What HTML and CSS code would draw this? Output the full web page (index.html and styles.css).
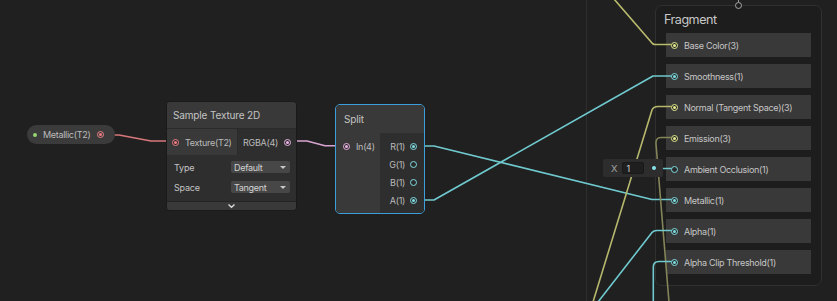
FILE: index.html
```html
<!DOCTYPE html>
<html>
<head>
<meta charset="utf-8">
<link rel="stylesheet" href="styles.css">
</head>
<body>
<div class="canvas">
  <div class="grid-line"></div>

  <div class="context">
    <div class="ctx-top"><span class="stem"></span><span class="top-ring"></span></div>
    <div class="ctx-title">Fragment</div>
    <div class="blocks">
      <div class="block"><span class="port yel on"></span><span class="blabel">Base Color(3)</span></div>
      <div class="block"><span class="port cyan on"></span><span class="blabel">Smoothness(1)</span></div>
      <div class="block"><span class="port yel on"></span><span class="blabel">Normal (Tangent Space)(3)</span></div>
      <div class="block"><span class="port yel on"></span><span class="blabel">Emission(3)</span></div>
      <div class="block"><span class="port cyan"></span><span class="blabel">Ambient Occlusion(1)</span></div>
      <div class="block"><span class="port cyan on"></span><span class="blabel">Metallic(1)</span></div>
      <div class="block"><span class="port cyan on"></span><span class="blabel">Alpha(1)</span></div>
      <div class="block"><span class="port cyan on"></span><span class="blabel">Alpha Clip Threshold(1)</span></div>
    </div>
  </div>

  <svg class="edges" width="837" height="301" viewBox="0 0 837 301">
    <g fill="none" stroke-width="1.6" stroke-linejoin="round" stroke-linecap="round">
      <path stroke="#d7777b" d="M104,135 L119,135 L151,141 L172,141"/>
      <path stroke="#d6a4d0" d="M291,141 L307,141 L325,145.7 L343,145.7"/>
      <path stroke="#6fc9ce" d="M416,146 L434,146 L652,199.5 L671,199.5"/>
      <path stroke="#6fc9ce" d="M416,200 L434,200 L653,76 L671,76"/>
      <path stroke="#b9bc6d" d="M614,-1 L652,43 Q653,44.5 655,44.5 L671,44.5"/>
      <path stroke="#b6b86e" d="M593,302 L652,110 Q653.5,106.5 658,106.5 L671,106.5"/>
      <path stroke="#85855a" d="M669,302 L656,144 Q655.5,137.5 661,137.5 L671,137.5"/>
      <path stroke="#6fc9ce" d="M598,302 L652,232.5 Q653.5,230.5 657,230.5 L671,230.5"/>
      <path stroke="#6fc9ce" d="M653.3,302 L653.3,267 Q653.3,261.5 659,261.5 L671,261.5"/>
      <path stroke="#6fc9ce" d="M656,168.5 L671,168.5"/>
    </g>
  </svg>

  <div class="prop">
    <span class="prop-dot"></span>
    <span class="prop-label">Metallic(T2)</span>
    <span class="port red on"></span>
  </div>

  <div class="node sample">
    <div class="ntitle">Sample Texture 2D</div>
    <div class="nports">
      <div class="ins">
        <div class="prow"><span class="port red on"></span><span class="plabel">Texture(T2)</span></div>
      </div>
      <div class="outs">
        <div class="prow out"><span class="plabel">RGBA(4)</span><span class="port pink on"></span></div>
      </div>
    </div>
    <div class="props">
      <div class="frow"><span class="flabel">Type</span><span class="drop">Default<span class="arrow"></span></span></div>
      <div class="frow"><span class="flabel">Space</span><span class="drop">Tangent<span class="arrow"></span></span></div>
    </div>
    <div class="collapse">
      <svg width="9" height="6" viewBox="0 0 9 6"><path d="M1.5,1.5 L4.5,4.3 L7.5,1.5" fill="none" stroke="#d8d8d8" stroke-width="1.4"/></svg>
    </div>
  </div>

  <div class="node split">
    <div class="ntitle">Split</div>
    <div class="nports sbody">
      <div class="ins sins">
        <div class="srow"><span class="port pink on"></span><span class="plabel">In(4)</span></div>
      </div>
      <div class="outs souts">
        <div class="srow out"><span class="plabel">R(1)</span><span class="port cyan on"></span></div>
        <div class="srow out"><span class="plabel">G(1)</span><span class="port cyan"></span></div>
        <div class="srow out"><span class="plabel">B(1)</span><span class="port cyan"></span></div>
        <div class="srow out"><span class="plabel">A(1)</span><span class="port cyan on"></span></div>
      </div>
    </div>
  </div>

  <div class="inline-input">
    <span class="ix">X</span>
    <span class="ifield">1</span>
    <span class="idot"></span>
  </div>
</div>
</body>
</html>
```

FILE: styles.css
```css
* { box-sizing: border-box; }
html, body {
  margin: 0;
  padding: 0;
  background: #202020;
}
body {
  width: 837px;
  height: 301px;
  overflow: hidden;
  font-family: Inter, "Noto Sans", sans-serif;
  color: #c4c4c4;
}
.canvas {
  position: relative;
  width: 837px;
  height: 301px;
  overflow: hidden;
  background: #202020;
}
.grid-line {
  position: absolute;
  left: 586px;
  top: 0;
  width: 1px;
  height: 301px;
  background: #2e2e2e;
}

/* ports */
.port {
  --c: #84e4e7;
  width: 7px;
  height: 7px;
  flex: 0 0 7px;
  border-radius: 50%;
  border: 1.2px solid var(--c);
  display: flex;
  align-items: center;
  justify-content: center;
  background: #2a2a2a;
}
.port.on::after {
  content: "";
  width: 3px;
  height: 3px;
  border-radius: 50%;
  background: var(--c);
}
.port.cyan { --c: #7fdde2; }
.port.yel { --c: #e6ec8e; }
.port.red { --c: #ef7e84; }
.port.pink { --c: #eab3e3; }

/* context / fragment */
.context {
  position: absolute;
  left: 655px;
  top: 5px;
  width: 167px;
  height: 281px;
  background: #1d1d1d;
  border: 1px solid #303030;
  border-radius: 7px;
}
.ctx-top {
  position: absolute;
  left: 79px;
  top: -6px;
  width: 7px;
  height: 10px;
  display: flex;
  flex-direction: column;
  align-items: center;
}
.ctx-top .stem {
  width: 1px;
  height: 2px;
  background: #9a9a9a;
}
.ctx-top .top-ring {
  width: 7px;
  height: 7px;
  border-radius: 50%;
  border: 1.2px solid #a8a8a8;
  background: #1d1d1d;
}
.ctx-title {
  height: 27px;
  display: flex;
  align-items: center;
  padding-left: 8px;
  font-size: 12.6px;
  letter-spacing: -0.5px;
  color: #c8c8c8;
}
.blocks {
  display: flex;
  flex-direction: column;
  gap: 7px;
  padding: 0 10px;
}
.block {
  height: 24px;
  background: #393939;
  display: flex;
  align-items: center;
  padding-left: 5px;
  gap: 6px;
}
.blabel {
  font-size: 9px;
  letter-spacing: -0.3px;
  color: #c6c6c6;
  white-space: nowrap;
}

.edges {
  position: absolute;
  left: 0;
  top: 0;
}

/* property pill */
.prop {
  position: absolute;
  left: 27px;
  top: 125px;
  width: 88px;
  height: 19px;
  border-radius: 10px;
  background: #3b3b3b;
  display: flex;
  align-items: center;
  padding-left: 6px;
}
.prop-dot {
  width: 4px;
  height: 4px;
  border-radius: 50%;
  background: #94d66f;
}
.prop-label {
  font-size: 9px;
  letter-spacing: -0.3px;
  color: #bdbdbd;
  margin-left: 6px;
  margin-right: auto;
}
.prop .port {
  margin-right: 11px;
  background: #3b3b3b;
}

/* nodes */
.node {
  position: absolute;
  border-radius: 4px;
  overflow: hidden;
  background: #2e2e2e;
  border: 1px solid #1a1a1a;
}
.ntitle {
  background: #393939;
  font-size: 10px;
  letter-spacing: -0.15px;
  color: #c4c4c4;
  display: flex;
  align-items: center;
  padding-left: 6px;
}
.nports {
  display: flex;
}
.ins {
  background: #393939;
}
.outs {
  flex: 1;
  background: #2e2e2e;
}
.plabel {
  font-size: 9px;
  letter-spacing: -0.3px;
  color: #bcbcbc;
  white-space: nowrap;
}
.prow {
  height: 26px;
  display: flex;
  align-items: center;
  gap: 6px;
  padding-left: 5px;
}
.prow.out {
  justify-content: flex-end;
  padding-left: 0;
  padding-right: 5px;
}

.sample {
  left: 166px;
  top: 101px;
  width: 131px;
  height: 110px;
}
.sample .ntitle {
  height: 27px;
  border-bottom: 1px solid #2a2a2a;
}
.sample .ins {
  width: 71px;
  border-right: 1px solid #2a2a2a;
}
.props {
  background: #2e2e2e;
  padding: 2px 6px 3px 7px;
  height: 46px;
}
.frow {
  height: 20px;
  display: flex;
  align-items: center;
  justify-content: space-between;
}
.flabel {
  font-size: 9px;
  letter-spacing: -0.2px;
  color: #c4c4c4;
}
.drop {
  width: 59px;
  height: 12px;
  background: #474747;
  border-radius: 2px;
  font-size: 9px;
  letter-spacing: -0.3px;
  color: #d2d2d2;
  display: flex;
  align-items: center;
  justify-content: space-between;
  padding: 0 4px 0 3px;
}
.arrow {
  width: 0;
  height: 0;
  border-left: 3px solid transparent;
  border-right: 3px solid transparent;
  border-top: 3px solid #c8c8c8;
}
.collapse {
  height: 9px;
  background: #393939;
  border-top: 1px solid #232323;
  display: flex;
  align-items: center;
  justify-content: center;
}

.split {
  left: 335px;
  top: 104px;
  width: 90px;
  height: 110px;
  border: 1px solid #3c9fdc;
  border-radius: 5px;
}
.split .ntitle {
  height: 28px;
  padding-left: 8px;
}
.sbody {
  height: 80px;
}
.sins {
  width: 44px;
  padding-top: 4px;
}
.souts {
  padding-top: 4px;
}
.srow {
  height: 18px;
  display: flex;
  align-items: center;
  gap: 6px;
  padding-left: 7px;
}
.srow.out {
  justify-content: flex-end;
  gap: 5px;
  padding-left: 0;
  padding-right: 7px;
}

/* inline input */
.inline-input {
  position: absolute;
  left: 603px;
  top: 159px;
  width: 60px;
  height: 18px;
  background: #2d2d2d;
  border-radius: 2px;
  display: flex;
  align-items: center;
  padding: 0 7px 0 8px;
}
.ix {
  font-size: 9.5px;
  color: #a4a4a4;
}
.ifield {
  margin-left: 5px;
  width: 22px;
  height: 12px;
  background: #1f1f1f;
  border: 1px solid #191919;
  border-radius: 2px;
  font-size: 9px;
  color: #cfcfcf;
  display: flex;
  align-items: center;
  padding-left: 3px;
}
.idot {
  margin-left: auto;
  width: 4px;
  height: 4px;
  border-radius: 50%;
  background: #84e4e7;
}
```
